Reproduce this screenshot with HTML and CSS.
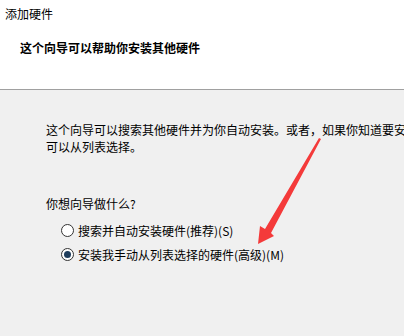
FILE: index.html
```html
<!DOCTYPE html>
<html lang="zh-CN">
<head>
<meta charset="utf-8">
<title>添加硬件</title>
<link rel="stylesheet" href="styles.css">
</head>
<body>
<div class="dialog">
  <header class="header">
    <div class="title">添加硬件</div>
    <div class="heading">这个向导可以帮助你安装其他硬件</div>
  </header>
  <main class="content">
    <p class="desc"><span class="line">这个向导可以搜索其他硬件并为你自动安装。或者，如果你知道要安装的硬件型号，也</span><span class="line">可以从列表选择。</span></p>
    <p class="question">你想向导做什么?</p>
    <div class="options">
      <label class="option"><span class="radio"></span><span>搜索并自动安装硬件(推荐)(S)</span></label>
      <label class="option"><span class="radio checked"></span><span>安装我手动从列表选择的硬件(高级)(M)</span></label>
    </div>
  </main>
  <svg class="arrow" width="404" height="336" viewBox="0 0 404 336">
    <polygon points="258,244 260,226 265,229 319,138 321,139 271,233 274,236" fill="#f43a3a"/>
  </svg>
</div>
</body>
</html>
```
FILE: styles.css
```css
html, body {
  margin: 0;
  padding: 0;
}
body {
  font-family: "Noto Sans CJK SC", "Noto Sans", sans-serif;
  font-size: 12px;
  color: #000;
  width: 404px;
  height: 336px;
  overflow: hidden;
}
.dialog {
  position: relative;
  width: 404px;
  height: 336px;
  display: flex;
  flex-direction: column;
  background: #f0f0f0;
}
.header {
  background: #fff;
  border-bottom: 1px solid #a0a0a0;
  padding: 6px 0 0 5px;
  height: 83px;
}
.title {
  line-height: 16px;
}
.heading {
  margin: 18px 0 0 15px;
  line-height: 16px;
  font-weight: bold;
}
.content {
  flex: 1;
  padding: 31px 0 0 46px;
  overflow: hidden;
}
.desc {
  margin: 0;
  line-height: 17px;
  white-space: nowrap;
  overflow: hidden;
}
.line {
  display: block;
}
.question {
  margin: 41px 0 0 0;
  line-height: 15px;
}
.options {
  margin: 7px 0 0 15px;
  display: flex;
  flex-direction: column;
}
.option {
  display: flex;
  align-items: center;
  gap: 4px;
  height: 24px;
  white-space: nowrap;
}
.radio {
  width: 11px;
  height: 11px;
  border: 1px solid #333;
  border-radius: 50%;
  background: #fff;
  display: flex;
  align-items: center;
  justify-content: center;
  flex: none;
}
.radio.checked::after {
  content: "";
  width: 7px;
  height: 7px;
  border-radius: 50%;
  background: #1f3d5c;
}
.arrow {
  position: absolute;
  left: 0;
  top: 0;
  pointer-events: none;
}
```
